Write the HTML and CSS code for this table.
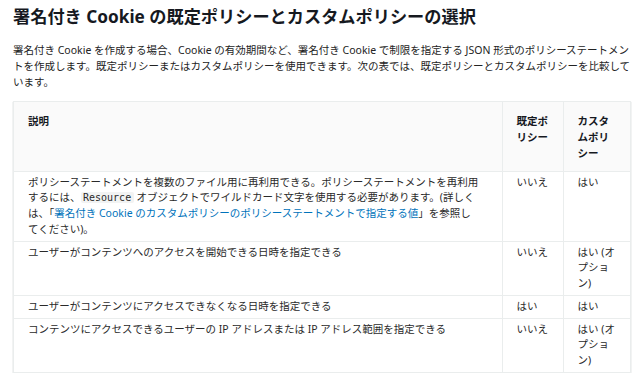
FILE: index.html
```html
<!DOCTYPE html>
<html lang="ja">
<head>
<meta charset="utf-8">
<link rel="stylesheet" href="styles.css">
</head>
<body>
<main class="page">
  <h1 class="title">署名付き Cookie の既定ポリシーとカスタムポリシーの選択</h1>
  <p class="intro">署名付き Cookie を作成する場合、Cookie の有効期間など、署名付き Cookie で制限を指定する JSON 形式のポリシーステートメントを作成します。既定ポリシーまたはカスタムポリシーを使用できます。次の表では、既定ポリシーとカスタムポリシーを比較しています。</p>
  <div class="table-wrap">
    <table class="policy-table">
      <colgroup>
        <col class="c-desc">
        <col class="c-canned">
        <col class="c-custom">
      </colgroup>
      <thead>
        <tr>
          <th>説明</th>
          <th>既定ポリシー</th>
          <th>カスタムポリシー</th>
        </tr>
      </thead>
      <tbody>
        <tr>
          <td>ポリシーステートメントを複数のファイル用に再利用できる。ポリシーステートメントを再利用するには、<code class="code">Resource</code> オブジェクトでワイルドカード文字を使用する必要があります。(詳しくは、「<a class="link" href="#">署名付き Cookie のカスタムポリシーのポリシーステートメントで指定する値</a>」を参照してください)。</td>
          <td>いいえ</td>
          <td>はい</td>
        </tr>
        <tr>
          <td>ユーザーがコンテンツへのアクセスを開始できる日時を指定できる</td>
          <td>いいえ</td>
          <td>はい (オプション)</td>
        </tr>
        <tr>
          <td>ユーザーがコンテンツにアクセスできなくなる日時を指定できる</td>
          <td>はい</td>
          <td>はい</td>
        </tr>
        <tr>
          <td>コンテンツにアクセスできるユーザーの IP アドレスまたは IP アドレス範囲を指定できる</td>
          <td>いいえ</td>
          <td>はい (オプション)</td>
        </tr>
      </tbody>
    </table>
  </div>
</main>
</body>
</html>
```

FILE: styles.css
```css
* { box-sizing: border-box; }
html, body { margin: 0; padding: 0; background: #ffffff; }
body {
  font-family: "Noto Sans", "Noto Sans CJK JP", sans-serif;
  color: #16191f;
}
.page {
  padding: 5px 9px 0 13px;
}
.title {
  margin: 0;
  font-size: 17.2px;
  line-height: 24px;
  font-weight: 700;
}
.intro {
  margin: 14px 0 0 0;
  font-size: 10.5px;
  line-height: 15.75px;
  color: #232323;
}
.table-wrap {
  margin-top: 11px;
  border: 1px solid #eaeded;
  box-shadow: 0 1px 1px 0 rgba(0, 28, 36, 0.3);
}
.policy-table {
  width: 100%;
  border-collapse: collapse;
  table-layout: fixed;
  font-size: 10.5px;
  line-height: 15.75px;
}
.c-desc { width: auto; }
.c-canned { width: 61px; }
.c-custom { width: 67px; }
.policy-table th,
.policy-table td {
  text-align: left;
  vertical-align: top;
  padding: 3px 13px 3px 14px;
  border-left: 1px solid #eaeded;
  border-top: 1px solid #eaeded;
}
.policy-table th:first-child,
.policy-table td:first-child {
  border-left: none;
  padding-right: 21px;
}
.policy-table thead tr th { border-top: none; }
.policy-table th {
  background: #fafafa;
  font-weight: 700;
  padding-top: 12px;
  padding-bottom: 9px;
  color: #16191f;
}
.policy-table td { color: #2a2a2a; }
.code {
  font-family: "DejaVu Sans Mono", monospace;
  font-size: 10px;
  line-height: 14px;
  background: #f2f3f3;
  padding: 0 2.5px;
  border-radius: 2px;
}
.link {
  color: #0073bb;
  text-decoration: none;
}
```
